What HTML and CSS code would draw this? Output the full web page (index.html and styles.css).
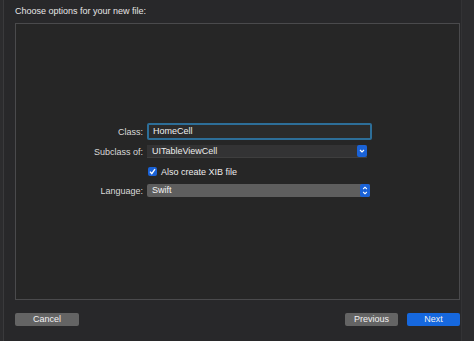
FILE: index.html
```
<html>
<head>
    <title>New File</title>
    <link rel="stylesheet" href="styles.css">
</head>
<body>
    <div class="window">
        <div class="title">Choose options for your new file:</div>
        <div class="panel">
            <div class="form">
                <div class="row row-class">
                    <div class="label">Class:</div>
                    <div class="field">HomeCell</div>
                </div>
                <div class="row row-subclass">
                    <div class="label">Subclass of:</div>
                    <div class="combo">
                        <span class="combo-text">UITableViewCell</span>
                        <span class="combo-btn">
                            <svg width="10" height="12" viewBox="0 0 10 12"><path d="M3 5 L5 7 L7 5" fill="none" stroke="#fff" stroke-width="1.2"/></svg>
                        </span>
                    </div>
                </div>
                <div class="row row-check">
                    <div class="label"></div>
                    <div class="check">
                        <span class="box">
                            <svg width="9" height="9" viewBox="0 0 9 9"><path d="M2 4.6 L3.8 6.6 L7 2.2" fill="none" stroke="#fff" stroke-width="1.4"/></svg>
                        </span>
                        <span>Also create XIB file</span>
                    </div>
                </div>
                <div class="row row-lang">
                    <div class="label">Language:</div>
                    <div class="popup">
                        <span class="popup-text">Swift</span>
                        <span class="popup-btn">
                            <svg width="10" height="13" viewBox="0 0 10 13"><path d="M3.2 5 L5 3.2 L6.8 5 M3.2 8 L5 9.8 L6.8 8" fill="none" stroke="#fff" stroke-width="1.1"/></svg>
                        </span>
                    </div>
                </div>
            </div>
        </div>
        <div class="footer">
            <div class="btn btn-grey btn-cancel">Cancel</div>
            <div class="spacer"></div>
            <div class="btn btn-grey btn-prev">Previous</div>
            <div class="btn btn-blue btn-next">Next</div>
        </div>
    </div>
</body>
</html>
```

FILE: styles.css
```
body {
    margin: 0;
    background-color: #2c2c2e;
    font-family: "Liberation Sans", Arial, sans-serif;
    font-size: 9px;
    color: #dcdcdc;
    height: 341px;
    overflow: hidden;
}
.window {
    margin-left: 3px;
    width: 459px;
    height: 341px;
    box-sizing: border-box;
    border-left: 1px solid #3a3a3c;
    border-right: 1px solid #333335;
    background-color: #28282a;
    padding-left: 11px;
}
.title {
    height: 23px;
    line-height: 23px;
    color: #e6e6e6;
}
.panel {
    width: 445px;
    height: 277px;
    box-sizing: border-box;
    border: 1px solid #4a4a4c;
    background-color: #262626;
    padding-top: 99px;
}
.form {
    display: flex;
    flex-direction: column;
}
.row {
    display: flex;
    align-items: center;
}
.label {
    width: 127px;
    margin-right: 4px;
    text-align: right;
    color: #dadada;
}
.row-class { height: 17px; }
.row-subclass { height: 13px; margin-top: 5px; }
.row-check { height: 9px; margin-top: 9px; }
.row-lang { height: 13px; margin-top: 8px; }

.field {
    width: 225px;
    height: 17px;
    box-sizing: border-box;
    border: 2px solid #2d6e98;
    border-radius: 2px;
    background-color: #2b2b2b;
    padding-left: 4px;
    line-height: 13px;
    color: #f0f0f0;
}
.combo {
    width: 220px;
    height: 13px;
    display: flex;
    background-color: #333334;
    border-bottom: 1px solid #3e3e3e;
    box-sizing: border-box;
}
.combo-text {
    flex: 1;
    padding-left: 5px;
    line-height: 12px;
    color: #ececec;
}
.combo-btn, .popup-btn {
    width: 10px;
    background-color: #1a62d6;
    border-radius: 2px;
    display: flex;
    align-items: center;
    justify-content: center;
}
.check {
    display: flex;
    align-items: center;
    color: #ececec;
}
.check .box {
    width: 9px;
    height: 9px;
    margin-left: 1px;
    margin-right: 4px;
    background-color: #1a62d6;
    border-radius: 2px;
    display: flex;
}
.popup {
    width: 223px;
    height: 13px;
    display: flex;
    background-color: #5e5e5e;
    border-radius: 2px;
}
.popup-text {
    flex: 1;
    padding-left: 5px;
    line-height: 13px;
    color: #f4f4f4;
}
.footer {
    display: flex;
    margin-top: 13px;
    padding-right: 1px;
}
.spacer { flex: 1; }
.btn {
    height: 13px;
    line-height: 13px;
    text-align: center;
    color: #f2f2f2;
    border-radius: 2px;
}
.btn-grey { background-color: #646464; }
.btn-blue { background-color: #1668de; }
.btn-cancel { width: 64px; }
.btn-prev { width: 53px; margin-right: 9px; }
.btn-next { width: 53px; }
```
